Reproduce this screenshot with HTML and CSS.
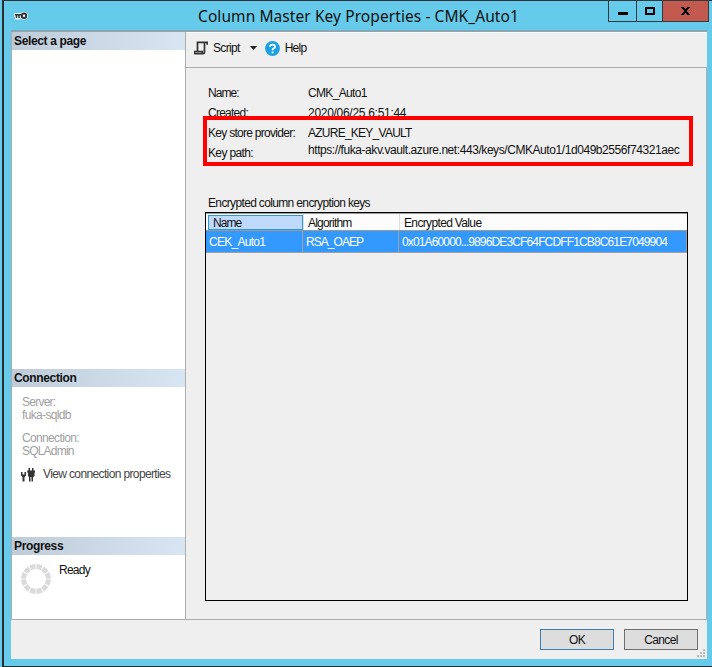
FILE: index.html
```html
<!DOCTYPE html>
<html lang="en">
<head>
<meta charset="utf-8">
<title>Column Master Key Properties - CMK_Auto1</title>
<link rel="stylesheet" href="styles.css">
</head>
<body>
<div class="window">
  <header class="titlebar">
    <svg class="key-icon" width="15" height="10" viewBox="0 0 15 10">
      <path d="M0 2h7.200a4 4 0 1 1 0 5.500H6v1H1V6H0z" fill="#fff" opacity=".85"/>
      <path d="M.8 3.800H8M2.500 4v3M5 4v3" stroke="#333" stroke-width="1.500" fill="none"/>
      <circle cx="10" cy="4.800" r="2.200" fill="#fff" stroke="#333" stroke-width="2"/>
    </svg>
    <h1 class="title"><span>Column Master Key Properties - CMK_Auto1</span></h1>
    <div class="controls">
      <div class="ctl min"><svg width="10" height="3"><path d="M0 0h10v3H0z"/></svg></div>
      <div class="ctl max"><svg width="10" height="8"><path d="M1 1h8v6H1z" fill="none" stroke="#000" stroke-width="2"/></svg></div>
      <div class="ctl close"><svg width="9" height="8" viewBox="0 0 9 8"><path d="M0 0h3v1h1v1h1V1h1V0h3v1H8v1H7v1H6v2h1v1h1v1h1v1H6V7H5V6H4v1H3v1H0V7h1V6h1V5h1V3H2V2H1V1H0z"/></svg></div>
    </div>
  </header>
  <div class="dialog">
    <div class="body">
      <aside class="side">
        <h2>Select a page</h2>
        <div class="pages"></div>
        <h2>Connection</h2>
        <div class="connection">
          <p class="s-server">Server:</p><p class="s-db">fuka-sqldb</p>
          <p class="s-conn second">Connection:</p><p class="s-admin">SQLAdmin</p>
          <div class="view">
            <svg width="15" height="15" viewBox="0 0 15 15" fill="#333">
              <path d="M0 5h1.500v2.500h2V5H5v3.500L3.500 10v4.500h-2V10L0 8.500z"/>
              <path d="M7.500 1H9v2.500h2V1h1.500v2.500H14V5.500h-.5V9l-1 1h-.5v4.500h-1.500V10h-1v4.500H8V10L7 9V5.500h-.8v-2h1.300z"/>
            </svg>
            <span class="s-view">View connection properties</span>
          </div>
        </div>
        <h2>Progress</h2>
        <div class="progress">
          <svg width="30" height="30" viewBox="0 0 30 30"><circle cx="15" cy="15" r="12.400" fill="none" stroke="#dadada" stroke-width="5" pathLength="120" stroke-dasharray="8.500 1.500" stroke-dashoffset="-.750"/></svg>
          <span class="s-ready">Ready</span>
        </div>
      </aside>
      <main class="main">
        <div class="toolbar">
          <svg class="script-icon" width="14" height="14" viewBox="0 0 14 14" fill="none" stroke="#333" stroke-width="1.700"><path d="M3.500 10V1.300H13M13.200 .5v3.200M10.500 1.800v9.500q0 1.400-1.500 1.400H1.500q-1 0-1.200-2.200H8.300v1.600"/></svg>
          <span class="s-script">Script</span>
          <svg class="arrow" width="7" height="4"><path d="M0 0h7L3.500 4z" fill="#222"/></svg>
          <svg class="help-icon" width="15" height="15" viewBox="0 0 15 15"><circle cx="7.500" cy="7.500" r="7.400" fill="#1ba1e2"/><path d="M5 5.800Q5 3.700 7.500 3.700T10 5.700Q10 6.700 8.800 7.300T7.500 9.200" fill="none" stroke="#fff" stroke-width="1.800"/><path d="M6.600 10.400h1.900v1.900H6.600z" fill="#fff"/></svg>
          <span class="s-help">Help</span>
        </div>
        <div class="content">
          <dl class="fields">
            <dt class="s-name">Name:</dt><dd class="s-cmk">CMK_Auto1</dd>
            <dt class="s-created">Created:</dt><dd class="s-date">2020/06/25 6:51:44</dd>
            <dt class="s-ksp">Key store provider:</dt><dd class="s-akv">AZURE_KEY_VAULT</dd>
            <dt class="s-path">Key path:</dt><dd class="s-url raised">https://fuka-akv.vault.azure.net:443/keys/CMKAuto1/1d049b2556f74321aec</dd>
          </dl>
          <div class="highlight"></div>
          <p class="caption"><span class="s-cap">Encrypted column encryption keys</span></p>
          <div class="grid">
            <div class="row head"><div class="cell selected"><span class="s-hn">Name</span></div><div class="cell"><span class="s-ha">Algorithm</span></div><div class="cell"><span class="s-he">Encrypted Value</span></div></div>
            <div class="row data"><div class="cell"><span class="s-cek">CEK_Auto1</span></div><div class="cell"><span class="s-rsa">RSA_OAEP</span></div><div class="cell"><span class="s-hex">0x01A60000...9896DE3CF64FCDFF1CB8C61E7049904</span></div></div>
          </div>
        </div>
      </main>
    </div>
    <footer class="footer">
      <button class="btn primary">OK</button>
      <button class="btn"><span class="s-cancel">Cancel</span></button>
      <svg class="grip" width="8" height="8" fill="#bbb"><path d="M6 0h2v2H6zM3 3h2v2H3zM6 3h2v2H6zM0 6h2v2H0zM3 6h2v2H3zM6 6h2v2H6z"/></svg>
    </footer>
  </div>
</div>
</body>
</html>
```
FILE: styles.css
```css
* { box-sizing: border-box; }
body { margin: 0; width: 712px; height: 667px; overflow: hidden; background: #66cbea; font: 12px/14px "Liberation Sans", Arial, sans-serif; letter-spacing: -.65px; color: #111; }
h1, h2, p, dl, dd { margin: 0; }
svg { display: block; flex: none; }
.window { margin-left: 2px; height: 667px; border: solid #2d2d30; border-width: 1px 0 1px 2px; padding: 0 5px 0 7px; border-top-color: #30343a; }
.titlebar { height: 29px; display: flex; position: relative; }
.key-icon { margin: 10px 0 0 3px; }
.title { flex: 1; padding: 5px 0 0 169px; font: 15.5px/21px "Noto Sans", sans-serif; letter-spacing: .08px; white-space: nowrap; color: #111; }
.controls { position: absolute; right: -2px; top: -1px; display: flex; height: 22px; border: 1px solid #34393d; }
.ctl { display: flex; align-items: center; justify-content: center; }
.min { width: 27px; padding-top: 5px; }
.max { width: 26px; border-left: 1px solid #34393d; }
.close { width: 46px; border-left: 1px solid #34393d; background: #c35a50; }
.dialog { height: 629px; background: #efefef; border-top: 2px solid #8ea6b2; }
.body { height: 588px; display: flex; border-bottom: 1px solid #adadb1; }
.side { width: 175px; flex: none; display: flex; flex-direction: column; background: #fff; border: solid #adadad; border-width: 0 1px; }
.side h2 { height: 18px; flex: none; padding-left: 2px; font-size: 12px; line-height: 18px; letter-spacing: -.35px; background: linear-gradient(90deg, #becbd8, #d8e5f2); }
.pages { height: 319px; flex: none; }
.connection { height: 150px; flex: none; padding: 9px 0 0 10px; color: #a0a0a0; line-height: 13px; white-space: nowrap; }
.second { margin-top: 10px; }
.view { display: flex; margin: 9px 0 0 -1px; gap: 7px; color: #444; }
.view span { padding-top: 1px; }
.progress { display: flex; padding: 9px; gap: 8px; }
.progress span { margin-top: -1px; }
.main { flex: 1; min-width: 0; border-top: 1px solid #fafafa; }
.toolbar { height: 35px; display: flex; align-items: center; border-bottom: 1px solid #adadb1; padding: 0 0 4px 8px; }
.s-script { margin-left: 5px; letter-spacing: -.67px; }
.arrow { margin-left: 10px; }
.help-icon { margin: 0 5px 0 8px; }
.content { height: 551px; border-right: 1px solid #adadb1; padding: 15px 18px 0 19px; position: relative; }
.fields { display: grid; grid-template-columns: 100px 1fr; grid-auto-rows: 20px; line-height: 20px; padding-left: 3px; white-space: nowrap; }
.raised { margin-top: -3px; }
.highlight { position: absolute; left: 17px; top: 48px; width: 490px; height: 50px; border: 4px solid #f00; }
.caption { margin: 33px 0 2px 3px; line-height: 14px; }
.grid { height: 389px; border: 1px solid #000; padding: 0; white-space: nowrap; }
.row { display: grid; grid-template-columns: 97px 96px 1fr; }
.head { height: 18px; grid-template-rows: 16px; border-top: 1px solid #999; border-bottom: 1px solid #999; background: #fcfcfc; line-height: 18px; }
.head .cell { border-left: 1px solid #e0e0e0; padding-left: 4px; }
.head .selected { margin: 1px 0 0 2px; padding-left: 4px; border: 1px solid #3397cf; background: #bfd9fb; line-height: 14px; }
.data { height: 22px; border-bottom: 1px solid #a0a0a0; background: #39f; color: #fff; line-height: 22px; }
.data .cell { padding-left: 3px; border-right: 1px solid #a0a0a0; }
.footer { height: 39px; display: flex; gap: 10px; padding: 9px 9px 0 0; justify-content: flex-end; position: relative; }
.btn { width: 74px; height: 21px; padding: 0; font: inherit; letter-spacing: inherit; color: inherit; background: #ddd; border: 1px solid #707070; border-radius: 0; }
.primary { border-color: #3c7fb1; }
.grip { position: absolute; right: 2px; bottom: 2px; }
.s-server, .s-created, .s-help, .s-ready, .s-akv { letter-spacing: -.75px; }
.s-name { letter-spacing: -.95px; }
.s-view { letter-spacing: -.63px; }
.s-date { letter-spacing: -.29px; }
.s-ksp, .s-cek { letter-spacing: -.72px; }
.s-url { letter-spacing: -.43px; }
.s-ha, .s-admin { letter-spacing: -.8px; }
.s-hn, .s-rsa { letter-spacing: -.95px; }
.s-hex { letter-spacing: -.86px; }
```
